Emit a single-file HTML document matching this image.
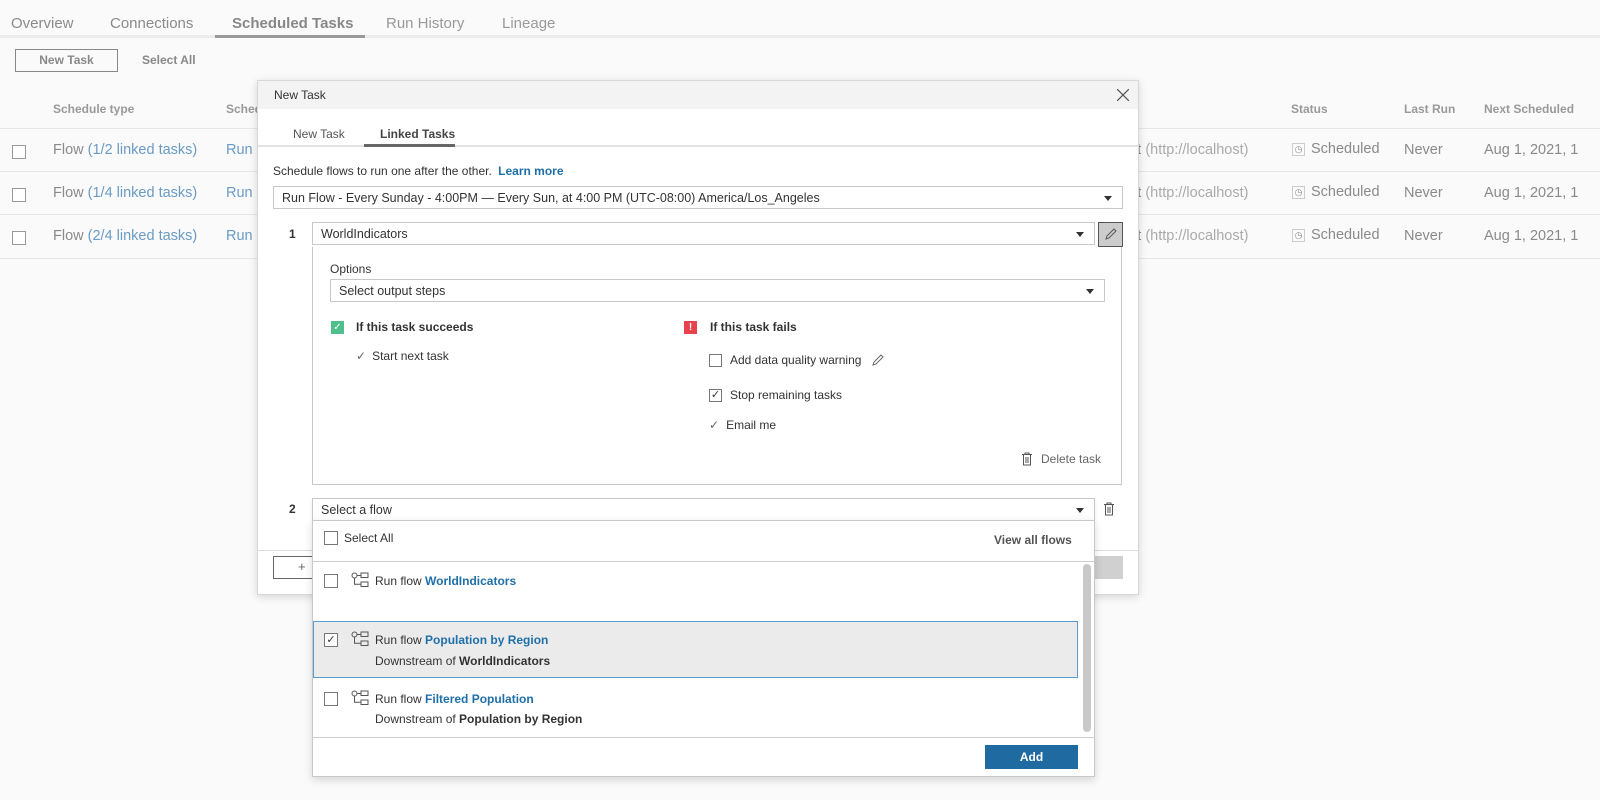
<!DOCTYPE html>
<html><head><meta charset="utf-8"><style>
*{box-sizing:border-box;margin:0;padding:0}
body{width:1600px;height:800px;background:#fafafa;font-family:"Liberation Sans",sans-serif;font-size:13px;color:#333;position:relative;overflow:hidden}
.a{position:absolute;white-space:nowrap}
.bg{color:#8a8a8a}
.lk{color:#6a9bc4}
.cb{position:absolute;width:14px;height:14px;border:1px solid #777;background:#fff}
.hl{position:absolute;height:1px;background:#e6e6e6}
.dd{position:absolute;border:1px solid #c8c8c8;background:#fff;height:23px;padding:4px 8px;font-size:12.5px;color:#333}
.dd:after{content:"";position:absolute;right:10px;top:9px;border:4px solid transparent;border-top:5px solid #333}
.b{font-weight:bold}
.blue{color:#1f6fa8;font-weight:bold}
</style></head><body>
<!-- background page -->
<div class="a bg" style="left:11px;top:15px;font-size:15px">Overview</div>
<div class="a bg" style="left:110px;top:15px;font-size:15px">Connections</div>
<div class="a" style="left:232px;top:15px;font-size:15px;font-weight:bold;color:#888">Scheduled Tasks</div>
<div class="a bg" style="left:386px;top:15px;font-size:15px;color:#999">Run History</div>
<div class="a bg" style="left:502px;top:15px;font-size:15px;color:#999">Lineage</div>
<div class="a" style="left:0;top:35px;width:1600px;height:3px;background:#ececec"></div>
<div class="a" style="left:215px;top:35px;width:150px;height:3px;background:#999"></div>
<div class="a" style="left:15px;top:49px;width:103px;height:23px;border:1px solid #888;text-align:center;line-height:21px;font-size:12px;font-weight:bold;color:#888">New Task</div>
<div class="a" style="left:142px;top:53px;font-size:12px;font-weight:bold;color:#888">Select All</div>
<div class="a" style="left:53px;top:102px;font-size:12px;font-weight:bold;color:#999">Schedule type</div>
<div class="a" style="left:226px;top:102px;font-size:12px;font-weight:bold;color:#999">Sched</div>
<div class="a" style="left:1291px;top:102px;font-size:12px;font-weight:bold;color:#999">Status</div>
<div class="a" style="left:1404px;top:102px;font-size:12px;font-weight:bold;color:#999">Last Run</div>
<div class="a" style="left:1484px;top:102px;font-size:12px;font-weight:bold;color:#999">Next Scheduled</div>
<div class="hl" style="left:0;top:128px;width:1600px"></div>
<div class="hl" style="left:0;top:171px;width:1600px"></div>
<div class="hl" style="left:0;top:214px;width:1600px"></div>
<div class="hl" style="left:0;top:258px;width:1600px"></div>
<div class="cb" style="left:12px;top:145px;border-color:#999"></div>
<div class="cb" style="left:12px;top:188px;border-color:#999"></div>
<div class="cb" style="left:12px;top:231px;border-color:#999"></div>
<div class="a bg" style="left:53px;top:142px;font-size:14.5px">Flow <span class="lk">(1/2 linked tasks)</span></div>
<div class="a bg" style="left:53px;top:185px;font-size:14.5px">Flow <span class="lk">(1/4 linked tasks)</span></div>
<div class="a bg" style="left:53px;top:228px;font-size:14.5px">Flow <span class="lk">(2/4 linked tasks)</span></div>
<div class="a lk" style="left:226px;top:142px;font-size:14.5px">Run F</div>
<div class="a lk" style="left:226px;top:185px;font-size:14.5px">Run F</div>
<div class="a lk" style="left:226px;top:228px;font-size:14.5px">Run F</div>
<div class="a bg" style="left:1130px;top:142px;font-size:14.5px">ct <span style="color:#aaa">(http://localhost)</span></div>
<div class="a bg" style="left:1130px;top:185px;font-size:14.5px">ct <span style="color:#aaa">(http://localhost)</span></div>
<div class="a bg" style="left:1130px;top:228px;font-size:14.5px">ct <span style="color:#aaa">(http://localhost)</span></div>
<div class="a bg" style="left:1292px;top:141px;font-size:14.5px"><span style="display:inline-block;width:13px;height:13px;border:1px solid #ccc;font-size:9px;text-align:center;line-height:11px;vertical-align:1px;margin-right:6px">◷</span>Scheduled</div>
<div class="a bg" style="left:1292px;top:184px;font-size:14.5px"><span style="display:inline-block;width:13px;height:13px;border:1px solid #ccc;font-size:9px;text-align:center;line-height:11px;vertical-align:1px;margin-right:6px">◷</span>Scheduled</div>
<div class="a bg" style="left:1292px;top:227px;font-size:14.5px"><span style="display:inline-block;width:13px;height:13px;border:1px solid #ccc;font-size:9px;text-align:center;line-height:11px;vertical-align:1px;margin-right:6px">◷</span>Scheduled</div>
<div class="a bg" style="left:1404px;top:142px;font-size:14.5px">Never</div>
<div class="a bg" style="left:1404px;top:185px;font-size:14.5px">Never</div>
<div class="a bg" style="left:1404px;top:228px;font-size:14.5px">Never</div>
<div class="a bg" style="left:1484px;top:142px;font-size:14.5px">Aug 1, 2021, 1</div>
<div class="a bg" style="left:1484px;top:185px;font-size:14.5px">Aug 1, 2021, 1</div>
<div class="a bg" style="left:1484px;top:228px;font-size:14.5px">Aug 1, 2021, 1</div>

<!-- modal -->
<div class="a" style="left:257px;top:80px;width:882px;height:515px;background:#fff;border:1px solid #d8d8d8;box-shadow:0 2px 8px rgba(0,0,0,.15)"></div>
<div class="a" style="left:258px;top:81px;width:880px;height:28px;background:#f3f3f3"></div>
<div class="a" style="left:274px;top:88px;font-size:12px">New Task</div>
<svg class="a" style="left:1117px;top:89px" width="12" height="12"><path d="M0 0L12 12M12 0L0 12" stroke="#555" stroke-width="1.2"/></svg>
<div class="a" style="left:293px;top:127px;font-size:12px;color:#555">New Task</div>
<div class="a" style="left:380px;top:127px;font-size:12px;font-weight:bold;color:#444">Linked Tasks</div>
<div class="a" style="left:258px;top:145px;width:880px;height:2px;background:#e2e2e2"></div>
<div class="a" style="left:364px;top:144px;width:91px;height:3px;background:#666"></div>
<div class="a" style="left:273px;top:164px;font-size:12px">Schedule flows to run one after the other. <span class="blue" style="margin-left:3px">Learn more</span></div>
<div class="dd" style="left:273px;top:186px;width:850px">Run Flow - Every Sunday - 4:00PM — Every Sun, at 4:00 PM (UTC-08:00) America/Los_Angeles</div>
<div class="a b" style="left:289px;top:227px;font-size:12px">1</div>
<div class="dd" style="left:312px;top:222px;width:783px">WorldIndicators</div>
<div class="a" style="left:1098px;top:222px;width:25px;height:25px;background:#ccc;border:1px solid #555"></div>
<svg class="a" style="left:1104px;top:228px" width="13" height="13"><path d="M2 11L3 8L10 1L12 3L5 10Z" fill="none" stroke="#555"/></svg>
<div class="a" style="left:312px;top:247px;width:810px;height:238px;border:1px solid #c8c8c8;border-top:none"></div>
<div class="a" style="left:330px;top:262px;font-size:12px">Options</div>
<div class="dd" style="left:330px;top:279px;width:775px">Select output steps</div>
<div class="a" style="left:331px;top:321px;width:13px;height:13px;background:#4fbf8b;color:#fff;font-size:10px;text-align:center;line-height:13px">✓</div>
<div class="a b" style="left:356px;top:320px;font-size:12px">If this task succeeds</div>
<div class="a" style="left:356px;top:349px;font-size:12px"><span style="color:#666;margin-right:6px">✓</span>Start next task</div>
<div class="a" style="left:684px;top:321px;width:13px;height:13px;background:#e8434d;color:#fff;font-size:10px;font-weight:bold;text-align:center;line-height:13px">!</div>
<div class="a b" style="left:710px;top:320px;font-size:12px">If this task fails</div>
<div class="cb" style="left:709px;top:354px;width:13px;height:13px"></div>
<div class="a" style="left:730px;top:353px;font-size:12px">Add data quality warning</div>
<svg class="a" style="left:872px;top:354px" width="12" height="12"><path d="M1 11L2 8L9 1L11 3L4 10Z" fill="none" stroke="#666"/></svg>
<div class="cb" style="left:709px;top:389px;width:13px;height:13px;font-size:11px;line-height:11px;text-align:center">✓</div>
<div class="a" style="left:730px;top:388px;font-size:12px">Stop remaining tasks</div>
<div class="a" style="left:709px;top:418px;font-size:12px"><span style="color:#666;margin-right:7px">✓</span>Email me</div>
<svg class="a" style="left:1021px;top:452px" width="12" height="14"><path d="M1 2.5H11M4 2.5V1H8V2.5M2.5 2.5V13H9.5V2.5M5 5V11M7 5V11" fill="none" stroke="#555"/></svg>
<div class="a" style="left:1041px;top:452px;font-size:12px;color:#666">Delete task</div>
<div class="a b" style="left:289px;top:502px;font-size:12px">2</div>
<div class="dd" style="left:312px;top:498px;width:783px;box-shadow:0 2px 4px rgba(0,0,0,.08)">Select a flow</div>
<svg class="a" style="left:1103px;top:502px" width="12" height="14"><path d="M1 2.5H11M4 2.5V1H8V2.5M2.5 2.5V13H9.5V2.5M5 5V11M7 5V11" fill="none" stroke="#555"/></svg>
<div class="a" style="left:258px;top:550px;width:880px;height:1px;background:#ddd"></div>
<div class="a" style="left:273px;top:556px;width:60px;height:23px;border:1px solid #666;padding-left:24px;line-height:20px;color:#666">+</div>
<div class="a" style="left:1070px;top:556px;width:53px;height:23px;background:#d0d0d0"></div>

<!-- dropdown panel -->
<div class="a" style="left:312px;top:520px;width:783px;height:257px;background:#fff;border:1px solid #c8c8c8;box-shadow:0 3px 8px rgba(0,0,0,.15)"></div>
<div class="cb" style="left:324px;top:531px;width:14px;height:14px"></div>
<div class="a" style="left:344px;top:531px;font-size:12px">Select All</div>
<div class="a b" style="left:994px;top:533px;font-size:12px;color:#555">View all flows</div>
<div class="a" style="left:313px;top:561px;width:781px;height:1px;background:#ccc"></div>
<div class="a" style="left:1083px;top:564px;width:8px;height:168px;background:#c8c8c8;border-radius:4px"></div>
<div class="a" style="left:313px;top:621px;width:765px;height:57px;background:#ebebeb;border:1px solid #5a9bd0"></div>
<svg width="0" height="0" style="position:absolute"><defs><symbol id="fl" viewBox="0 0 18 16"><circle cx="3.5" cy="3.5" r="2.5" fill="none" stroke="#555"/><rect x="10" y="1" width="7" height="4.5" fill="none" stroke="#555"/><rect x="10" y="10" width="7" height="4.5" fill="none" stroke="#555"/><path d="M6 3.5H10M3.5 6V12.2H10" fill="none" stroke="#555"/></symbol></defs></svg>
<div class="cb" style="left:324px;top:574px"></div>
<svg class="a" style="left:351px;top:572px" width="18" height="16"><use href="#fl"/></svg>
<div class="a" style="left:375px;top:574px;font-size:12px">Run flow <span class="blue">WorldIndicators</span></div>
<div class="cb" style="left:324px;top:633px;font-size:11px;line-height:12px;text-align:center">✓</div>
<svg class="a" style="left:351px;top:631px" width="18" height="16"><use href="#fl"/></svg>
<div class="a" style="left:375px;top:633px;font-size:12px">Run flow <span class="blue">Population by Region</span></div>
<div class="a" style="left:375px;top:654px;font-size:12px">Downstream of <b>WorldIndicators</b></div>
<div class="cb" style="left:324px;top:692px"></div>
<svg class="a" style="left:351px;top:690px" width="18" height="16"><use href="#fl"/></svg>
<div class="a" style="left:375px;top:692px;font-size:12px">Run flow <span class="blue">Filtered Population</span></div>
<div class="a" style="left:375px;top:712px;font-size:12px">Downstream of <b>Population by Region</b></div>
<div class="a" style="left:313px;top:737px;width:781px;height:1px;background:#ccc"></div>
<div class="a" style="left:985px;top:745px;width:93px;height:24px;background:#1f6aa0;color:#fff;font-weight:bold;font-size:12px;text-align:center;line-height:24px">Add</div>
</body></html>
